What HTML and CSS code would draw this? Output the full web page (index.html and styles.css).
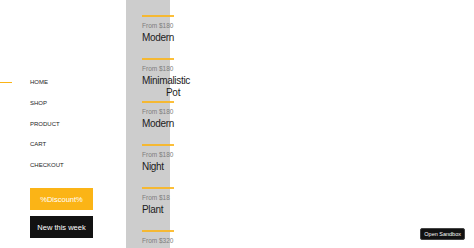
FILE: index.html
```html
<!DOCTYPE html>
<html lang="en">
<head>
<meta charset="UTF-8" />
<meta name="viewport" content="width=device-width, initial-scale=1" />
<title>Shop</title>
<link rel="stylesheet" href="styles.css">
</head>
<body>

<div class="page">
  <!-- SIDEBAR -->
  <aside class="sidebar">
    <nav class="nav">
      <a class="nav-item active" href="#">HOME</a>
      <a class="nav-item" href="#">SHOP</a>
      <a class="nav-item" href="#">PRODUCT</a>
      <a class="nav-item" href="#">CART</a>
      <a class="nav-item" href="#">CHECKOUT</a>
    </nav>
    <button class="btn btn-discount">%Discount%</button>
    <button class="btn btn-dark">New this week</button>
  </aside>

  <!-- PRODUCT LIST -->
  <section class="products">
    <div class="card">
      <div class="price">From $180</div>
      <div class="title">Modern</div>
    </div>
    <div class="card">
      <div class="price">From $180</div>
      <div class="title">Minimalistic Pot</div>
    </div>
    <div class="card">
      <div class="price">From $180</div>
      <div class="title">Modern</div>
    </div>
    <div class="card">
      <div class="price">From $180</div>
      <div class="title">Night</div>
    </div>
    <div class="card">
      <div class="price">From $18</div>
      <div class="title">Plant</div>
    </div>
    <div class="card">
      <div class="price">From $320</div>
    </div>
  </section>
</div>

<a class="sandbox" href="#">Open Sandbox</a>

</body>
</html>
```

FILE: styles.css
```css
:root {
  --accent: #fbb416;
  --ink: #1c1c1c;
  --column: #cdcdcd;
}
* {
  box-sizing: border-box;
  margin: 0;
  padding: 0;
}
html, body {
  height: 100%;
  overflow: hidden;
  background: #fff;
  color: var(--ink);
  font-family: 'Liberation Sans', Arial, sans-serif;
}
.page {
  display: flex;
  height: 100%;
}

/* SIDEBAR */
.sidebar {
  width: 126px;
  display: flex;
  flex-direction: column;
  padding-top: 78px;
}
.nav {
  display: flex;
  flex-direction: column;
  gap: 12.75px;
}
.nav-item {
  display: flex;
  align-items: center;
  height: 8px;
  font-size: 6px;
  color: var(--ink);
  text-decoration: none;
}
.nav-item::before {
  content: '';
  width: 12px;
  height: 1px;
  margin-right: 18px;
  background: transparent;
}
.nav-item.active::before {
  background: var(--accent);
}
.btn {
  width: 63px;
  height: 22px;
  margin-left: 30px;
  border: none;
  font-family: inherit;
  font-size: 7.5px;
  color: #fff;
}
.btn-discount {
  margin-top: 19px;
  background: var(--accent);
}
.btn-dark {
  margin-top: 6px;
  background: #121212;
}

/* PRODUCTS */
.products {
  width: 44px;
  height: 100%;
  background: var(--column);
  padding: 15px 0 0 16px;
}
.card {
  height: 43px;
  width: 60px;
}
.card::before {
  content: '';
  display: block;
  width: 32px;
  height: 2px;
  background: var(--accent);
  opacity: 0.85;
}
.price {
  margin-top: 4px;
  font-size: 6.5px;
  line-height: 9px;
  color: #7d7d7d;
}
.title {
  width: 48px;
  margin-top: 1.5px;
  padding-left: 24px;
  text-indent: -24px;
  font-size: 10px;
  line-height: 12px;
  letter-spacing: -0.3px;
  color: var(--ink);
}

/* SANDBOX BADGE */
.sandbox {
  position: fixed;
  right: 9px;
  bottom: 8px;
  padding: 2px 3px;
  background: #111;
  border: 1px solid #444;
  border-radius: 2px;
  color: #fff;
  font-size: 5.5px;
  text-decoration: none;
}
```
